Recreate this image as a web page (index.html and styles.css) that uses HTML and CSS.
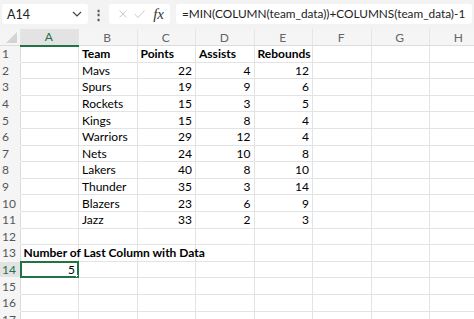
FILE: index.html
```html
<!DOCTYPE html>
<html>
<head>
<meta name="viewport" content="width=device-width, initial-scale=1.0">
<title>Sheet1</title>
<link rel="stylesheet" href="styles.css">
</head>
<body>

<div class="formula-bar">
  <div class="name-box">
    <span>A14</span>
    <svg class="chev" width="10" height="6" viewBox="0 0 10 6"><path d="M1 1 L5 5 L9 1" fill="none" stroke="#444" stroke-width="1.2"/></svg>
  </div>
  <div class="dots">⋮</div>
  <div class="fx-box">
    <svg width="14" height="14" viewBox="0 0 14 14"><path d="M2 2 L12 12 M12 2 L2 12" stroke="#b8b8b8" stroke-width="1.1"/></svg>
    <svg width="16" height="14" viewBox="0 0 16 14"><path d="M1 7 L5.5 12 L15 2" fill="none" stroke="#b8b8b8" stroke-width="1.1"/></svg>
    <span class="fx">fx</span>
  </div>
  <div class="formula">=MIN(COLUMN(team_data))+COLUMNS(team_data)-1</div>
</div>

<table class="sheet">
  <colgroup>
    <col class="rowhead-col">
    <col class="cell-col"><col class="cell-col"><col class="cell-col"><col class="cell-col">
    <col class="cell-col"><col class="cell-col"><col class="cell-col"><col class="cell-col">
  </colgroup>
  <tr class="col-heads">
    <th class="corner"><svg width="20" height="16" viewBox="0 0 20 16"><path d="M17 3 L17 14 L6 14 Z" fill="#d4d4d4"/></svg></th>
    <th class="sel">A</th><th>B</th><th>C</th><th>D</th><th>E</th><th>F</th><th>G</th><th>H</th>
  </tr>
  <tr><th>1</th><td></td><td class="b">Team</td><td class="b">Points</td><td class="b">Assists</td><td class="b">Rebounds</td><td></td><td></td><td></td></tr>
  <tr><th>2</th><td></td><td>Mavs</td><td class="n">22</td><td class="n">4</td><td class="n">12</td><td></td><td></td><td></td></tr>
  <tr><th>3</th><td></td><td>Spurs</td><td class="n">19</td><td class="n">9</td><td class="n">6</td><td></td><td></td><td></td></tr>
  <tr><th>4</th><td></td><td>Rockets</td><td class="n">15</td><td class="n">3</td><td class="n">5</td><td></td><td></td><td></td></tr>
  <tr><th>5</th><td></td><td>Kings</td><td class="n">15</td><td class="n">8</td><td class="n">4</td><td></td><td></td><td></td></tr>
  <tr><th>6</th><td></td><td>Warriors</td><td class="n">29</td><td class="n">12</td><td class="n">4</td><td></td><td></td><td></td></tr>
  <tr><th>7</th><td></td><td>Nets</td><td class="n">24</td><td class="n">10</td><td class="n">8</td><td></td><td></td><td></td></tr>
  <tr><th>8</th><td></td><td>Lakers</td><td class="n">40</td><td class="n">8</td><td class="n">10</td><td></td><td></td><td></td></tr>
  <tr><th>9</th><td></td><td>Thunder</td><td class="n">35</td><td class="n">3</td><td class="n">14</td><td></td><td></td><td></td></tr>
  <tr><th>10</th><td></td><td>Blazers</td><td class="n">23</td><td class="n">6</td><td class="n">9</td><td></td><td></td><td></td></tr>
  <tr><th>11</th><td></td><td>Jazz</td><td class="n">33</td><td class="n">2</td><td class="n">3</td><td></td><td></td><td></td></tr>
  <tr><th>12</th><td></td><td></td><td></td><td></td><td></td><td></td><td></td><td></td></tr>
  <tr><th>13</th><td class="b overflow">Number of Last Column with Data</td><td></td><td></td><td></td><td></td><td></td><td></td><td></td></tr>
  <tr><th class="sel-row">14</th><td class="n active">5<span class="handle"></span></td><td></td><td></td><td></td><td></td><td></td><td></td><td></td></tr>
  <tr><th>15</th><td></td><td></td><td></td><td></td><td></td><td></td><td></td><td></td></tr>
  <tr><th>16</th><td></td><td></td><td></td><td></td><td></td><td></td><td></td><td></td></tr>
  <tr><th>17</th><td></td><td></td><td></td><td></td><td></td><td></td><td></td><td></td></tr>
</table>

</body>
</html>
```

FILE: styles.css
```css
* {
  box-sizing: border-box;
}

body {
  margin: 0;
  width: 474px;
  height: 319px;
  overflow: hidden;
  background-color: #ffffff;
  font-family: Lato, "Open Sans", sans-serif;
  color: #000000;
}

/* top strip with name box and formula */
.formula-bar {
  display: flex;
  align-items: center;
  height: 29px;
  padding: 4px 2px 5px 2px;
  background-color: #f3f3f3;
}

.name-box {
  display: flex;
  align-items: center;
  justify-content: space-between;
  width: 86px;
  height: 20px;
  padding: 0 6px 0 5px;
  background-color: #ffffff;
  border-radius: 3px;
  font-size: 12.5px;
  color: #222222;
}

.dots {
  width: 21px;
  text-align: center;
  font-size: 13px;
  font-weight: bold;
  color: #555555;
}

.fx-box {
  display: flex;
  align-items: center;
  gap: 6px;
  width: 61px;
  height: 20px;
  padding: 0 6px 0 9px;
  background-color: #ffffff;
  border-radius: 3px;
}

.fx {
  font-family: "Liberation Serif", serif;
  font-style: italic;
  font-size: 15px;
  color: #333333;
  margin-left: 2px;
}

.formula {
  flex: 1;
  height: 20px;
  margin-left: 6px;
  padding: 0 0 0 6px;
  background-color: #ffffff;
  border-radius: 3px;
  font-size: 11.8px;
  line-height: 20px;
  color: #222222;
  white-space: nowrap;
  overflow: hidden;
}

/* grid */
.sheet {
  border-collapse: collapse;
  table-layout: fixed;
  width: 488px;
}

.rowhead-col {
  width: 20px;
}

.cell-col {
  width: 58.5px;
}

.sheet th,
.sheet td {
  height: 16.6px;
  padding: 0 3px;
  font-size: 12px;
  line-height: 15px;
  white-space: nowrap;
  overflow: hidden;
}

.sheet td {
  border-right: 1px solid #e3e3e3;
  border-bottom: 1px solid #e3e3e3;
}

.sheet th {
  font-weight: normal;
  color: #555555;
  background-color: #f5f5f5;
  text-align: left;
  padding-left: 2px;
  border-bottom: 1px solid #f5f5f5;
  border-right: 1px solid #dcdcdc;
}

.col-heads th {
  height: 16px;
  text-align: center;
  color: #666666;
  border-bottom: 1px solid #dcdcdc;
  border-right: 1px solid #e6e6e6;
}

.col-heads th.corner {
  padding: 0;
}

.col-heads th.corner svg {
  display: block;
}

.col-heads th.sel {
  background-color: #e3e3e3;
  border-bottom: 2px solid #217346;
  color: #217346;
}

.sheet th.sel-row {
  background-color: #e3e3e3;
  color: #217346;
}

.b {
  font-weight: bold;
}

.n {
  text-align: right;
}

.sheet td.overflow {
  overflow: visible;
}

.sheet td.active {
  position: relative;
  outline: 2px solid #217346;
  outline-offset: -2px;
}

.handle {
  position: absolute;
  right: -3px;
  bottom: -3px;
  width: 5px;
  height: 5px;
  background-color: #217346;
  border: 1px solid #ffffff;
}
```
